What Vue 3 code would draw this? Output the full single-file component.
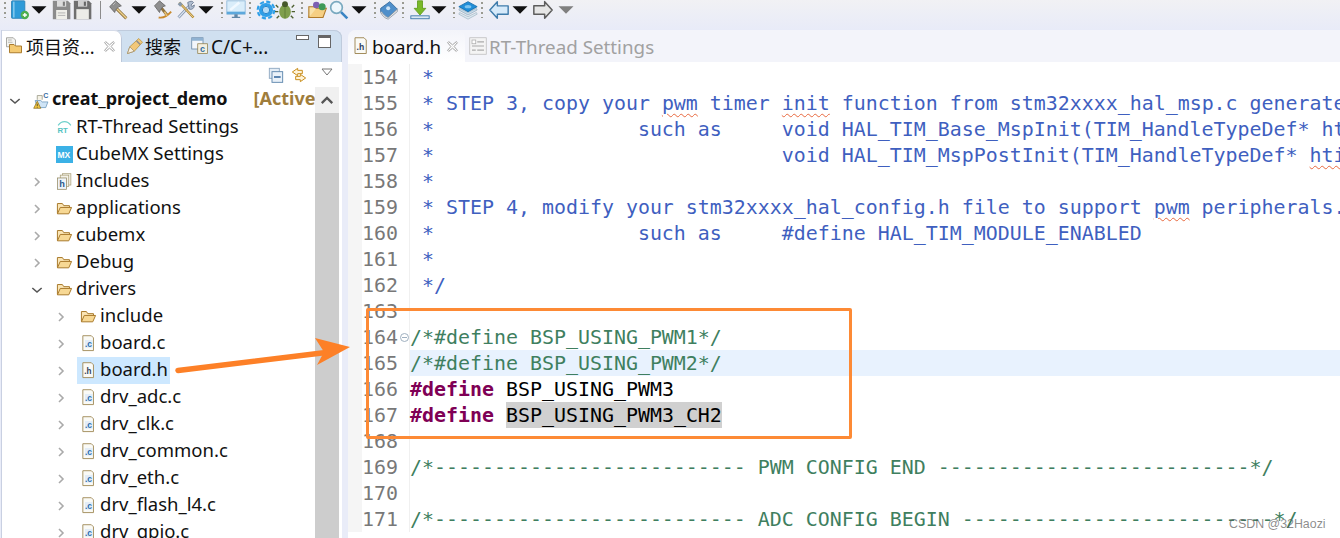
<script setup>
const icons = {
  newfile: '<rect x="3" y="1" width="16" height="21" rx="1" fill="#2f9bd8" stroke="#2a7fb5"/><rect x="5" y="2" width="1.6" height="19" fill="#8fd0f2"/><circle cx="19" cy="18" r="5" fill="#4cae50"/><path d="M19 15.500v5M16.500 18h5" stroke="#fff" stroke-width="1.6"/>',
  save: '<path d="M1 1h18l3 3v19H1z" fill="#8b8b8b"/><rect x="6" y="1" width="11" height="7" fill="#dcdcdc"/><rect x="13" y="2" width="2.5" height="5" fill="#7c7c7c"/><rect x="5" y="12" width="13" height="11" fill="#efefe9"/><path d="M7 15.500h9M7 18.500h9" stroke="#aaa"/>',
  saveall: '<path d="M1 1h18l3 3v19H1z" fill="#6f6f6f"/><rect x="6" y="1" width="11" height="7" fill="#cfcfcf"/><rect x="13" y="2" width="2.5" height="5" fill="#666"/><rect x="4" y="11" width="15" height="12" fill="#ecece8"/>',
  hammer: '<path d="M10 10l12 12" stroke="#8f7440" stroke-width="3.6"/><path d="M10 10l12 12" stroke="#efd28a" stroke-width="1.6"/><path d="M2 8l7-7 7 6-3 1-4 4-1 3z" fill="#8f8f8f" stroke="#666"/><path d="M6 6l3-3" stroke="#c8c8c8"/>',
  hammer2: '<path d="M10 8l8 10" stroke="#8f7440" stroke-width="3.4"/><path d="M3 7l6-6 7 6-3 1-3 4-1 3z" fill="#8f8f8f" stroke="#666"/><path d="M8 21c5 1 9 0 15-7" fill="none" stroke="#c98a2e" stroke-width="2.2"/><path d="M15 14l3 5" stroke="#e8c070" stroke-width="2"/>',
  tools: '<path d="M3 21L17 6" stroke="#7f8fa8" stroke-width="3.2"/><path d="M3 21L17 6" stroke="#dce6f2" stroke-width="1.4"/><path d="M14 3c3-2 6-2 7 0l-3 3 1 2 3-2c0 4-3 6-6 5z" fill="#aebccf" stroke="#66768e"/><path d="M4 3l17 18" stroke="#b08a3c" stroke-width="3"/><path d="M4 3l17 18" stroke="#f0d48a" stroke-width="1.2"/><path d="M2 5l3-3 3 3-3 3z" fill="#8899aa"/>',
  monitor: '<rect x="1" y="1" width="22" height="16" fill="#d9edfa" stroke="#8cb8d8"/><rect x="1" y="14" width="22" height="3" fill="#5da8dc"/><path d="M5 12L16 3" stroke="#f1f9ff" stroke-width="3"/><path d="M10 17h4v3h3v1.500H7V20h3z" fill="#5f86a6"/>',
  gear: '<circle cx="12" cy="12" r="8.500" fill="#2f9fe8"/><circle cx="12" cy="12" r="10" fill="none" stroke="#2f9fe8" stroke-width="2.600" stroke-dasharray="5 2.850"/><circle cx="12" cy="12" r="4.400" fill="#b5dcf7" stroke="#2a86cc" stroke-width="1.200"/>',
  bug: '<ellipse cx="12" cy="14" rx="7" ry="8.500" fill="#7f9f4c"/><path d="M12 6v16" stroke="#5c7a33"/><circle cx="12" cy="5" r="3.500" fill="#46582a"/><path d="M4 9L1 6M20 9l3-3M4 14H0M20 14h4M5 19l-3 3M19 19l3 3" stroke="#4e6030" stroke-width="1.600"/>',
  folderp: '<path d="M1 21l3-11h18l-4 11z" fill="#f6cf83" stroke="#b07a2a" stroke-width="1.300"/><path d="M1 21V8h7l2 2" fill="#f9e2aa" stroke="#b07a2a" stroke-width="1.300"/><circle cx="10" cy="6" r="4" fill="#7d5fb2"/><circle cx="17" cy="8" r="4.200" fill="#3f9a57"/>',
  search: '<circle cx="9" cy="9" r="7" fill="#eef7fc" stroke="#79a9bf" stroke-width="2"/><path d="M14.500 14.500L22 22" stroke="#3a85c4" stroke-width="3.200"/>',
  book: '<path d="M2 10L13 2l9 9-11 10c-3 1-6-2-9-7z" fill="#4f8fca" stroke="#2f6598"/><path d="M3 14c3 4 5 6 8 7l11-10v3L11 23c-4-1-7-4-9-8z" fill="#e8e8e8" stroke="#8e9aa6"/><circle cx="11" cy="10" r="2.400" fill="#cfe4f6"/>',
  download: '<path d="M9 1h6v9h4l-7 8-7-8h4z" fill="#79b928" stroke="#5f9a1c"/><rect x="1" y="19" width="22" height="3.500" fill="#dbe8f3" stroke="#2f6ea3"/>',
  layers: '<path d="M12 15l10-5 1 2-11 6L1 12l1-2z" fill="#c8dcea" stroke="#8ea7b8" stroke-width=".8"/><path d="M12 20l10-5 1 2-11 6L1 17l1-2z" fill="#dce8f0" stroke="#9db2c0" stroke-width=".8"/><path d="M12 2l11 6-11 6L1 8z" fill="#1f8ed8" stroke="#126aa8"/><ellipse cx="12" cy="8" rx="4" ry="2" fill="#7cc4ef"/>',
  back: '<path d="M10 2v5h13v10H10v5L1 12z" fill="#d6eafa" stroke="#3f7cab" stroke-width="1.700" stroke-linejoin="round"/>',
  forward: '<path d="M14 2v5H1v10h13v5l9-10z" fill="#e6e6e6" stroke="#5d5d5d" stroke-width="1.800" stroke-linejoin="round"/>',
  caret: '<path d="M6 9h12l-6 6z" transform="translate(-6 -6) scale(1.500)" fill="#111"/>',
  caretGray: '<path d="M6 9h12l-6 6z" transform="translate(-6 -6) scale(1.500)" fill="#7f7f7f"/>',
  projects: '<path d="M2 1h9l3 3v9H2z" fill="#f3f3f0" stroke="#8e8e88"/><path d="M4 4h5M4 7h6" stroke="#a5a59e"/><path d="M6 21V10h6l2 2h8v9z" fill="#f4ca72" stroke="#a9792b" stroke-width="1.300"/>',
  pen: '<path d="M2 22l3-9L17 2l5 5L11 19z" fill="#f2c879" stroke="#b99238"/><path d="M2 22l3-9 6 6z" fill="#f7efdf" stroke="#9f8f70"/><path d="M14 5l5 5" stroke="#8c8c8c" stroke-width="2"/>',
  cpp: '<rect x="1" y="1" width="15" height="15" fill="#f2f6fb" stroke="#5e7f9f"/><rect x="1" y="1" width="15" height="4" fill="#8fb2d2"/><rect x="9" y="9" width="13" height="13" fill="#f3efe0" stroke="#8f7d4a"/><text x="12" y="20" font-size="12" font-weight="700" font-family=\'Liberation Sans\' fill="#2f6ea3">c</text>',
  fileC: '<path d="M4 1h12l3 3v18H4z" fill="#fafaf6" stroke="#a08a58" stroke-width="1.300"/><rect x="7" y="7" width="11" height="11" fill="#e3edf7"/><text x="7" y="17" font-size="12" font-weight="700" font-family=\'Liberation Sans\' fill="#2e6fae">.c</text>',
  fileH: '<path d="M4 1h12l3 3v18H4z" fill="#fafaf6" stroke="#a08a58" stroke-width="1.300"/><text x="6" y="17" font-size="11.500" font-weight="700" font-family=\'Liberation Sans\' fill="#30415f">.h</text>',
  folder: '<path d="M2 19V5h7l2 3h8v3" fill="#fbe6b6" stroke="#a9792b" stroke-width="1.400"/><path d="M2 19.500l4-9h16l-4 9z" fill="#f7d894" stroke="#a9792b" stroke-width="1.400"/>',
  includes: '<rect x="9" y="1" width="12" height="16" fill="#f4f2e8" stroke="#a59a72"/><rect x="6" y="3" width="12" height="16" fill="#f4f2e8" stroke="#a59a72"/><rect x="2" y="7" width="13" height="16" fill="#eef3f9" stroke="#8f8258"/><text x="4.500" y="20" font-size="13" font-weight="700" font-family=\'Liberation Sans\' fill="#2b5a8c">h</text>',
  rt: '<path d="M3 9c5-7 13-7 18 0" fill="none" stroke="#6fd0cb" stroke-width="1.600"/><text x="2" y="20" font-size="11" font-weight="700" font-family=\'Liberation Sans\' fill="#55c3c2">RT</text>',
  mx: '<rect x="0" y="0" width="24" height="24" fill="#3bb1e6"/><text x="2" y="16.500" font-size="12" font-weight="700" font-family=\'Liberation Sans\' fill="#fff">MX</text>',
  project: '<path d="M3 12h8l2 2h8l-3 8H6z" fill="#cfe4f6" stroke="#5d8db5"/><path d="M6 11V5h7v6" fill="#f5f2e6" stroke="#8e8e78"/><text x="14.500" y="9" font-size="10" font-weight="700" font-family=\'Liberation Sans\' fill="#3a6ca0">C</text><path d="M6 13l5 10H1z" fill="#f3c73f" stroke="#8a6a1c"/><path d="M6 16.500v3.500M6 21v1" stroke="#222"/>',
  settings: '<rect x="1" y="1" width="22" height="22" fill="#f4f4f4" stroke="#bbb"/><rect x="4" y="4" width="5" height="5" fill="#fff" stroke="#aaa"/><path d="M11 6.500h9M4 12h16M4 17.500h5M11 17.500h9" stroke="#aaa" stroke-width="1.400"/>',
  close: '<path d="M5 3l7 6 7-6 2 2-6 7 6 7-2 2-7-6-7 6-2-2 6-7-6-7z" fill="#fff" stroke="#8d8d8d" stroke-width="1.500"/>',
  collapse: '<rect x="2" y="2" width="15" height="15" fill="#e4edf6" stroke="#8fa9c2" stroke-width="1.400"/><rect x="6" y="7" width="16" height="16" fill="#e9f1f9" stroke="#5e87ad" stroke-width="1.400"/><path d="M9 15h10" stroke="#2a5f96" stroke-width="2.200"/>',
  link: '<path d="M10 2L2 7.500 10 13V10h7V5h-7z" fill="#fff3d8" stroke="#c98f1e" stroke-width="1.500"/><path d="M14 11l8 5.500-8 5.500v-3H7v-5h7z" fill="#fff3d8" stroke="#c98f1e" stroke-width="1.500"/>',
  chevDown: '<path d="M5 9l7 6 7-6" fill="none" stroke="#555" stroke-width="2.400"/>',
  chevRight: '<path d="M9 6l6 6-6 6" fill="none" stroke="#aaa" stroke-width="2.400"/>',
}

const tools = [
  ['dots', 2], ['newfile', 17], ['caret', 39], ['save', 62], ['saveall', 85], ['line', 99], ['hammer', 117], ['caret', 139],
  ['hammer2', 162], ['tools', 186], ['caret', 208], ['dots', 222], ['monitor', 236], ['dots', 249], ['gear', 264], ['bug', 288],
  ['dots', 301], ['folderp', 316], ['search', 339], ['caret', 361], ['dots', 375], ['book', 389], ['dots', 403], ['download', 418],
  ['caret', 441], ['dots', 454], ['layers', 468], ['dots', 482], ['back', 497], ['caret', 519], ['forward', 543], ['caretGray', 565],
].map(([name, center], i, all) => {
  const left = i ? (all[i - 1][1] + center) / 2 : 0
  const right = i < all.length - 1 ? (center + all[i + 1][1]) / 2 : center + 12
  return { name, width: right - left }
})

const tree = [
  { text: 'RT-Thread Settings', icon: 'rt', depth: 1 },
  { text: 'CubeMX Settings', icon: 'mx', depth: 1 },
  { text: 'Includes', icon: 'includes', depth: 1, arrow: 'chevRight' },
  { text: 'applications', icon: 'folder', depth: 1, arrow: 'chevRight' },
  { text: 'cubemx', icon: 'folder', depth: 1, arrow: 'chevRight' },
  { text: 'Debug', icon: 'folder', depth: 1, arrow: 'chevRight' },
  { text: 'drivers', icon: 'folder', depth: 1, arrow: 'chevDown' },
  { text: 'include', icon: 'folder', depth: 2, arrow: 'chevRight' },
  { text: 'board.c', icon: 'fileC', depth: 2, arrow: 'chevRight' },
  { text: 'board.h', icon: 'fileH', depth: 2, arrow: 'chevRight', selected: true },
  { text: 'drv_adc.c', icon: 'fileC', depth: 2, arrow: 'chevRight' },
  { text: 'drv_clk.c', icon: 'fileC', depth: 2, arrow: 'chevRight' },
  { text: 'drv_common.c', icon: 'fileC', depth: 2, arrow: 'chevRight' },
  { text: 'drv_eth.c', icon: 'fileC', depth: 2, arrow: 'chevRight' },
  { text: 'drv_flash_l4.c', icon: 'fileC', depth: 2, arrow: 'chevRight' },
  { text: 'drv_gpio.c', icon: 'fileC', depth: 2, arrow: 'chevRight' },
]

const S = 'doc'
const lines = [
  [[' *', S]],
  [[' * STEP 3, copy your ', S], ['pwm', S, 1], [' timer ', S], ['init', S, 1], [' function from stm32xxxx_hal_msp.c generate', S]],
  [[' *                 such as     void HAL_TIM_Base_MspInit(TIM_HandleTypeDef* ht', S]],
  [[' *                             void HAL_TIM_MspPostInit(TIM_HandleTypeDef* ', S], ['hti', S, 1]],
  [[' *', S]],
  [[' * STEP 4, modify your stm32xxxx_hal_config.h file to support ', S], ['pwm', S, 1], [' peripherals.', S]],
  [[' *                 such as     #define HAL_TIM_MODULE_ENABLED', S]],
  [[' *', S]],
  [[' */', S]],
  [],
  [['/*#define BSP_USING_PWM1*/', 'com']],
  [['/*#define BSP_USING_PWM2*/', 'com']],
  [['#define', 'kw'], [' BSP_USING_PWM3', 'plain']],
  [['#define', 'kw'], [' ', 'plain'], ['BSP_USING_PWM3_CH2', 'sel']],
  [],
  [['/*-------------------------- PWM CONFIG END --------------------------*/', 'com']],
  [],
  [['/*-------------------------- ADC CONFIG BEGIN --------------------------*/', 'com']],
].map((segs, i) => ({ num: 154 + i, segs, current: 154 + i === 165, fold: 154 + i === 164 }))
</script>

<template>
  <div class="page">
    <header class="toolbar">
      <template v-for="(tool, i) in tools" :key="i">
        <span v-if="tool.name === 'dots'" class="slot" :style="{ width: tool.width + 'px' }"><i class="dots"></i></span>
        <span v-else-if="tool.name === 'line'" class="slot" :style="{ width: tool.width + 'px' }"><i class="vline"></i></span>
        <span v-else class="slot" :style="{ width: tool.width + 'px' }">
          <svg class="tool-icon" viewBox="0 0 24 24" v-html="icons[tool.name]"></svg>
        </span>
      </template>
    </header>

    <main class="workbench">
      <section class="explorer">
        <div class="tabbar">
          <div class="vtab active">
            <svg class="tab-icon" viewBox="0 0 24 24" v-html="icons.projects"></svg>
            <span class="vtab-text">项目资...</span>
            <svg class="close" viewBox="0 0 24 24" v-html="icons.close"></svg>
          </div>
          <div class="vtab search">
            <svg class="tab-icon" viewBox="0 0 24 24" v-html="icons.pen"></svg>
            <span class="vtab-text">搜索</span>
          </div>
          <div class="vtab cdt">
            <svg class="tab-icon" viewBox="0 0 24 24" v-html="icons.cpp"></svg>
            <span class="vtab-text">C/C+...</span>
          </div>
          <span class="win-btn minimize"></span>
          <span class="win-btn maximize"></span>
        </div>
        <div class="view-tools">
          <svg class="vt-icon" viewBox="0 0 24 24" v-html="icons.collapse"></svg>
          <svg class="vt-icon" viewBox="0 0 24 24" v-html="icons.link"></svg>
          <svg class="vt-menu" viewBox="0 0 12 8"><path d="M1 1h10L6 7z" fill="#fff" stroke="#777" /></svg>
        </div>
        <div class="tree-area">
          <div class="tree">
            <div class="row root">
              <svg class="arrow" viewBox="0 0 24 24" v-html="icons.chevDown"></svg>
              <svg class="node-icon" viewBox="0 0 24 24" v-html="icons.project"></svg>
              <span class="root-name">creat_project_demo</span>
              <span class="active-tag">[Active</span>
            </div>
            <div v-for="node in tree" :key="node.text" class="row" :class="'depth-' + node.depth">
              <span class="arrow-box">
                <svg v-if="node.arrow" class="arrow" viewBox="0 0 24 24" v-html="icons[node.arrow]"></svg>
              </span>
              <span class="item" :class="{ selected: node.selected }">
                <svg class="node-icon" viewBox="0 0 24 24" v-html="icons[node.icon]"></svg>
                <span class="label">{{ node.text }}</span>
              </span>
            </div>
          </div>
          <div class="scrollbar">
            <div class="scroll-up">
              <svg viewBox="0 0 16 10" class="scroll-chev"><path d="M2 8l6-6 6 6" fill="none" stroke="#555" stroke-width="2.600" /></svg>
            </div>
            <div class="scroll-thumb"></div>
          </div>
        </div>
      </section>

      <section class="editor">
        <div class="editor-tabs">
          <div class="etab active">
            <svg class="tab-icon" viewBox="0 0 24 24" v-html="icons.fileH"></svg>
            <span class="etab-text">board.h</span>
            <svg class="close" viewBox="0 0 24 24" v-html="icons.close"></svg>
          </div>
          <div class="etab idle">
            <svg class="tab-icon" viewBox="0 0 24 24" v-html="icons.settings"></svg>
            <span class="etab-text">RT-Thread Settings</span>
          </div>
        </div>
        <div class="code-area">
          <div v-for="line in lines" :key="line.num" class="code-line">
            <span class="stripe"></span>
            <span class="num">{{ line.num }}</span>
            <span class="fold"><i v-if="line.fold" class="fold-mark"></i></span>
            <span class="code" :class="{ current: line.current }"><span
              v-for="(seg, j) in line.segs" :key="j" :class="[seg[1], { squiggle: seg[2] }]">{{ seg[0] }}</span></span>
          </div>
        </div>
      </section>
    </main>

    <div class="callout-box"></div>
    <svg class="callout-arrow" viewBox="0 0 1340 538">
      <path d="M178 370.500L326 352.500" stroke="#fd8027" stroke-width="5.500" stroke-linecap="round" fill="none" />
      <path d="M315 338L350 347 317 365 324 352z" fill="#fd8027" />
    </svg>
    <span class="watermark">CSDN @32Haozi</span>
  </div>
</template>

<style scoped>
.page {
  position: relative;
  width: 1340px;
  height: 538px;
  overflow: hidden;
  display: flex;
  flex-direction: column;
  background: #e9ecf8;
  font-family: "Noto Sans", "Noto Sans CJK SC", sans-serif;
  color: #111;
}
.toolbar {
  height: 30px;
  flex: none;
  display: flex;
  align-items: flex-start;
  background: linear-gradient(#f1f1f4, #e8ebf8);
  box-sizing: border-box;
}
.slot {
  flex: none;
  height: 19px;
  display: flex;
  align-items: center;
  justify-content: center;
}
.tool-icon { width: 22px; height: 20px; flex: none; overflow: visible; }
.dots {
  width: 2px;
  height: 16px;
  background: repeating-linear-gradient(#9a9a90 0 2px, transparent 2px 5px);
}
.vline { width: 1px; height: 18px; background: #8c8c8c; }
.workbench { flex: 1; display: flex; min-height: 0; }

.explorer {
  width: 341px;
  margin-left: 1px;
  flex: none;
  display: flex;
  flex-direction: column;
  background: #fff;
  border-left: 1px solid #c9d0e2;
  box-sizing: border-box;
  border-top-right-radius: 8px;
}
.tabbar {
  height: 32px;
  flex: none;
  display: flex;
  position: relative;
  background: #d0e0f0;
  border-top-right-radius: 8px;
  box-shadow: inset 0 1px 0 #bfcbdc, inset -1px 0 0 #bfcbdc;
}
.vtab { display: flex; align-items: center; height: 32px; font-size: 18px; white-space: nowrap; }
.vtab.active {
  width: 120px;
  padding-left: 3px;
  box-sizing: border-box;
  background: #fff;
  border-top-right-radius: 8px;
  box-shadow: inset 0 1px 0 #d5dbe8, inset -1px 0 0 #bcc8da;
}
.vtab.search { margin-left: 4px; width: 65px; }
.vtab.search .vtab-text { margin-left: 1px; }
.vtab.cdt { width: 80px; }
.vtab-text { margin-left: 3px; padding-top: 2px; line-height: 30px; }
.vtab.cdt .vtab-text { font-size: 19px; margin-left: 2px; }
.tab-icon { width: 18px; height: 18px; flex: none; }
.close { width: 13px; height: 13px; flex: none; margin-left: auto; margin-right: 6px; }
.win-btn { position: absolute; box-sizing: border-box; border: 1px solid #666; background: #fff; }
.minimize { left: 294px; top: 5px; width: 13px; height: 5px; }
.maximize { left: 316px; top: 5px; width: 13px; height: 13px; border-top-width: 3px; }

.view-tools {
  height: 25px;
  flex: none;
  display: flex;
  align-items: center;
  padding-left: 266px;
}
.vt-icon { width: 16px; height: 16px; margin-right: 7px; flex: none; }
.vt-menu { width: 12px; height: 8px; margin-left: 7px; margin-top: -6px; flex: none; }

.tree-area { flex: 1; min-height: 0; display: flex; padding-right: 3px; }
.tree { flex: none; width: 313px; overflow: hidden; }
.row { height: 27px; display: flex; align-items: center; font-size: 18.500px; white-space: nowrap; }
.root { padding-left: 5px; font-weight: 700; font-size: 18px; overflow: hidden; }
.root .arrow { margin-right: 10px; }
.root .node-icon { margin-right: 2px; margin-left: 0; }
.root-name, .active-tag, .label { line-height: 23px; padding-bottom: 4px; }
.active-tag { margin-left: 26px; color: #9f7d3c; }
.depth-1 { padding-left: 27px; }
.depth-2 { padding-left: 51px; }
.arrow-box { width: 24px; height: 16px; flex: none; display: flex; }
.arrow { width: 16px; height: 16px; flex: none; }
.item { display: flex; align-items: center; height: 27px; padding-right: 2px; box-sizing: border-box; }
.item.selected { background: #cde8ff; }
.node-icon { width: 17px; height: 17px; flex: none; margin-right: 3px; margin-left: 3px; }
.scrollbar { width: 24px; flex: none; display: flex; flex-direction: column; background: #f0f0f0; }
.scroll-up { height: 26px; flex: none; display: flex; align-items: center; justify-content: center; }
.scroll-chev { width: 14px; height: 9px; }
.scroll-thumb { flex: 1; background: #cdcdcd; }

.editor { flex: 1; min-width: 0; margin-left: 6px; display: flex; flex-direction: column; }
.editor-tabs { height: 32px; flex: none; display: flex; background: #f3f4fa; border-top-left-radius: 8px; }
.etab { display: flex; align-items: center; font-size: 18.800px; height: 32px; white-space: nowrap; }
.etab.active {
  width: 117px;
  padding-left: 4px;
  box-sizing: border-box;
  background: linear-gradient(#f3f4fa, #fff);
  border-radius: 8px 8px 0 0;
}
.etab.idle { padding-left: 4px; color: #a1a1a1; }
.etab-text { margin-left: 2px; padding-top: 2px; line-height: 30px; }
.code-area { flex: 1; min-height: 0; overflow: hidden; background: #fff; padding-top: 2px; }
.code-line {
  height: 26px;
  display: flex;
  font-family: "DejaVu Sans Mono", "Liberation Mono", monospace;
  font-size: 19.930px;
  line-height: 28px;
  white-space: pre;
}
.stripe { width: 14px; flex: none; background: #f5f5f5; }
.num { width: 36px; flex: none; color: #787878; text-align: right; }
.fold { width: 12px; flex: none; display: flex; align-items: center; justify-content: center; }
.fold-mark {
  width: 9px;
  height: 9px;
  box-sizing: border-box;
  border: 1px solid #9fb0c0;
  border-radius: 50%;
  background: linear-gradient(#9fb0c0, #9fb0c0) center / 5px 1px no-repeat;
}
.code { flex: 1; min-width: 0; box-shadow: -1px 0 0 #f0f0f0; }
.code.current { background: #e8f2fe; }
.doc { color: #3f5fbf; }
.com { color: #3f7f5f; }
.kw { color: #7f0055; font-weight: 700; }
.plain { color: #000; }
.sel { color: #000; background: #d0d0d0; display: inline-block; height: 26px; }
.squiggle { text-decoration: underline wavy #e8693f 1px; text-underline-offset: 3px; }

.callout-box {
  position: absolute;
  left: 366px;
  top: 308px;
  width: 486px;
  height: 131px;
  box-sizing: border-box;
  border: 3px solid #fd8a35;
  border-radius: 2px;
}
.callout-arrow { position: absolute; left: 0; top: 0; width: 1340px; height: 538px; pointer-events: none; }
.watermark {
  position: absolute;
  left: 1229px;
  top: 516px;
  font-family: "Liberation Sans", sans-serif;
  font-size: 12.400px;
  line-height: 16px;
  color: rgba(90, 90, 90, 0.7);
}
</style>
